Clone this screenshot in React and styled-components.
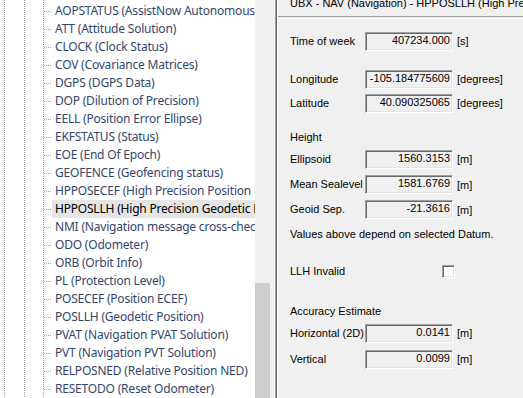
import React from "react";
import styled, { createGlobalStyle } from "styled-components";

const GlobalStyle = createGlobalStyle`
  html, body { margin: 0; padding: 0; background: #ffffff; overflow: hidden; }
  #root { width: 523px; height: 398px; }
`;

const Page = styled.div`
  display: flex;
  width: 523px;
  height: 398px;
  overflow: hidden;
`;

const TreePanel = styled.div`
  flex: none;
  width: 255px;
  height: 100%;
  overflow: hidden;
  background-color: #ffffff;
  background-image:
    linear-gradient(#a0a0a0 50%, transparent 50%),
    linear-gradient(#a0a0a0 50%, transparent 50%),
    linear-gradient(#a0a0a0 50%, transparent 50%);
  background-size: 1px 2px;
  background-repeat: repeat-y;
  background-position: 4px 0, 24px 0, 43px 0;
`;

const TreeList = styled.ul`
  list-style: none;
  margin: 0;
  padding: 2px 0 0 0;
`;

const TreeRow = styled.li`
  display: flex;
  align-items: center;
  height: 18px;
  padding-left: 44px;
  white-space: nowrap;
`;

const Connector = styled.span`
  flex: none;
  width: 8px;
  height: 1px;
  background-image: linear-gradient(to right, #a0a0a0 50%, transparent 50%);
  background-size: 2px 1px;
  background-repeat: repeat-x;
`;

const TreeLabel = styled.span`
  flex: 1;
  height: 18px;
  line-height: 18px;
  padding-left: 3px;
  font-family: "Noto Sans", "Open Sans", sans-serif;
  font-size: 12px;
  letter-spacing: -0.2px;
  color: ${(p) => (p.$selected ? "#000000" : "#33466e")};
  background: ${(p) => (p.$selected ? "#e5e5e5" : "transparent")};
`;

const ScrollTrack = styled.div`
  flex: none;
  width: 17px;
  height: 100%;
  display: flex;
  flex-direction: column;
  background: #f0f0f0;
`;

const ScrollThumb = styled.div`
  flex: 1;
  width: 15px;
  background: #cdcdcd;
`;

const Splitter = styled.div`
  flex: none;
  width: 5px;
  height: 100%;
  background: #f0f0f0;
  box-shadow: inset -1px 0 #696969, inset -2px 0 #a0a0a0;
`;

const Dialog = styled.div`
  flex: 1;
  min-width: 0;
  height: 100%;
  background: #f0f0f0;
  border-left: 1px solid #ffffff;
  font-family: "Liberation Sans", Arial, sans-serif;
  font-size: 11px;
  color: #000000;
  display: flex;
  flex-direction: column;
`;

const Title = styled.div`
  margin-top: -3px;
  height: 13px;
  line-height: 13px;
  padding-left: 12px;
  white-space: nowrap;
  overflow: hidden;
`;

const Separator = styled.div`
  margin-top: 6px;
  height: 1px;
  border-top: 1px solid #a0a0a0;
  border-bottom: 1px solid #ffffff;
`;

const Row = styled.div`
  display: flex;
  align-items: center;
  height: ${(p) => p.$h || 19}px;
  margin-top: ${(p) => p.$mt}px;
  padding-left: 12px;
  white-space: nowrap;
`;

const Label = styled.span`
  flex: none;
  width: 75px;
  line-height: 13px;
`;

const Text = styled.span`
  line-height: 13px;
`;

const ValueBox = styled.div`
  flex: none;
  box-sizing: border-box;
  width: 88px;
  height: 19px;
  line-height: 15px;
  padding-right: 2px;
  text-align: right;
  background: #f0f0f0;
  border-top: 1px solid #a0a0a0;
  border-left: 1px solid #a0a0a0;
  border-right: 1px solid #ffffff;
  border-bottom: 1px solid #ffffff;
  box-shadow: inset 1px 1px 0 #696969, inset -1px -1px 0 #e3e3e3;
`;

const Unit = styled.span`
  margin-left: 4px;
  line-height: 13px;
  margin-top: ${(p) => p.$drop || 0}px;
`;

const CheckBox = styled.span`
  flex: none;
  box-sizing: border-box;
  width: 13px;
  height: 13px;
  margin-left: ${(p) => p.$ml}px;
  background: #ffffff;
  border-top: 1px solid #a0a0a0;
  border-left: 1px solid #a0a0a0;
  border-right: 1px solid #ffffff;
  border-bottom: 1px solid #ffffff;
  box-shadow: inset 1px 1px 0 #696969, inset -1px -1px 0 #e3e3e3;
`;

const messages = [
  "AOPSTATUS (AssistNow Autonomous Status)",
  "ATT (Attitude Solution)",
  "CLOCK (Clock Status)",
  "COV (Covariance Matrices)",
  "DGPS (DGPS Data)",
  "DOP (Dilution of Precision)",
  "EELL (Position Error Ellipse)",
  "EKFSTATUS (Status)",
  "EOE (End Of Epoch)",
  "GEOFENCE (Geofencing status)",
  "HPPOSECEF (High Precision Position ECEF)",
  "HPPOSLLH (High Precision Geodetic Position)",
  "NMI (Navigation message cross-check information)",
  "ODO (Odometer)",
  "ORB (Orbit Info)",
  "PL (Protection Level)",
  "POSECEF (Position ECEF)",
  "POSLLH (Geodetic Position)",
  "PVAT (Navigation PVAT Solution)",
  "PVT (Navigation PVT Solution)",
  "RELPOSNED (Relative Position NED)",
  "RESETODO (Reset Odometer)",
];

const SELECTED = "HPPOSLLH (High Precision Geodetic Position)";

function Field({ mt, label, value, unit, drop }) {
  return (
    <Row $mt={mt}>
      <Label>{label}</Label>
      <ValueBox>{value}</ValueBox>
      <Unit $drop={drop}>{unit}</Unit>
    </Row>
  );
}

export default function App() {
  return (
    <>
      <GlobalStyle />
      <Page>
        <TreePanel>
          <TreeList>
            {messages.map((m) => (
              <TreeRow key={m}>
                <Connector />
                <TreeLabel $selected={m === SELECTED}>{m}</TreeLabel>
              </TreeRow>
            ))}
          </TreeList>
        </TreePanel>
        <ScrollTrack>
          <div style={{ height: 283 }} />
          <ScrollThumb />
        </ScrollTrack>
        <Splitter />
        <Dialog>
          <Title>UBX - NAV (Navigation) - HPPOSLLH (High Precision Geodetic Position)</Title>
          <Separator />
          <Field mt={13} label="Time of week" value="407234.000" unit="[s]" />
          <Field mt={19} label="Longitude" value="-105.184775609" unit="[degrees]" />
          <Field mt={5} label="Latitude" value="40.090325065" unit="[degrees]" />
          <Row $mt={18} $h={13}>
            <Text>Height</Text>
          </Row>
          <Field mt={6} label="Ellipsoid" value="1560.3153" unit="[m]" />
          <Field mt={6} label="Mean Sealevel" value="1581.6769" unit="[m]" drop={2} />
          <Field mt={6} label="Geoid Sep." value="-21.3616" unit="[m]" drop={2} />
          <Row $mt={9} $h={13}>
            <Text>Values above depend on selected Datum.</Text>
          </Row>
          <Row $mt={24} $h={13}>
            <Label>LLH Invalid</Label>
            <CheckBox $ml={77} />
          </Row>
          <Row $mt={27} $h={13}>
            <Text>Accuracy Estimate</Text>
          </Row>
          <Field mt={6} label="Horizontal (2D)" value="0.0141" unit="[m]" />
          <Field mt={7} label="Vertical" value="0.0099" unit="[m]" />
        </Dialog>
      </Page>
    </>
  );
}
